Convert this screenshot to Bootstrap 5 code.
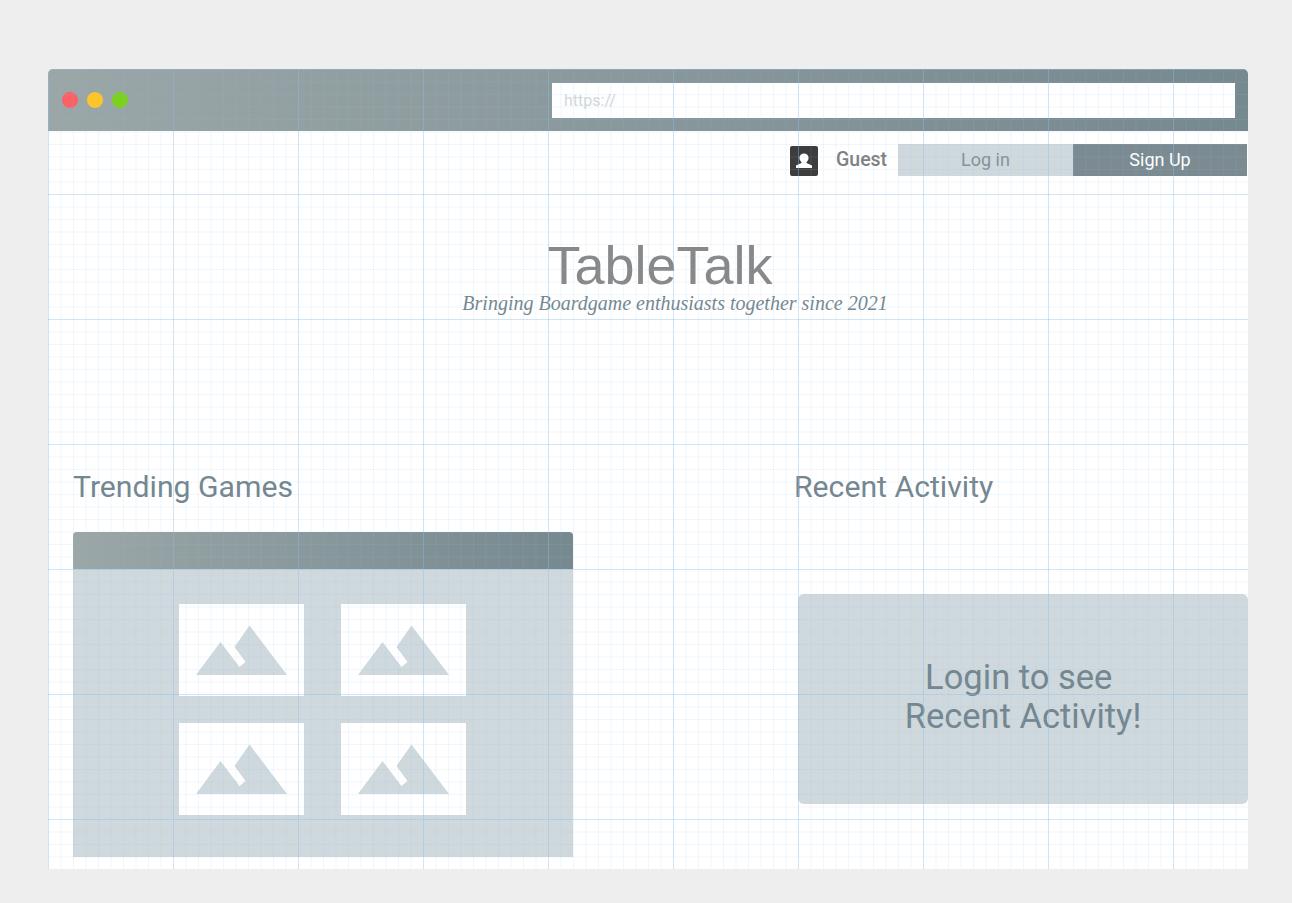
<!DOCTYPE html>
<html lang="en">
<head>
<meta charset="utf-8">
<title>TableTalk</title>
<link href="https://cdn.jsdelivr.net/npm/bootstrap@5.3.0/dist/css/bootstrap.min.css" rel="stylesheet">
<style>
body{background:#eee;font-family:Roboto,sans-serif;margin:0;min-height:903px}
.stage{padding:69px 44px 34px 48px}
.frame{position:relative;width:1200px;height:800px;background:#fff;border-radius:5px 5px 0 0;overflow:hidden}
.grid-sheet{position:absolute;inset:0;pointer-events:none;
 background-image:
  linear-gradient(to right,rgba(140,190,235,.32) 1px,transparent 1px),
  linear-gradient(to bottom,rgba(140,190,235,.32) 1px,transparent 1px),
  linear-gradient(to right,rgba(140,190,235,.13) 1px,transparent 1px),
  linear-gradient(to bottom,rgba(140,190,235,.13) 1px,transparent 1px);
 background-size:125px 125px,125px 125px,12.5px 12.5px,12.5px 12.5px}
.chrome-bar{height:62px;background:linear-gradient(90deg,#9ba6a7,#76898f);padding:14px 13px 0 14px;align-items:flex-start}
.dots{gap:9px;padding-top:9px;width:490px}
.dot{width:16px;height:16px;border-radius:50%}
.dot-r{background:#fb6263}.dot-y{background:#fdc527}.dot-g{background:#7cd11f}
.url-box{width:683px;height:35px;background:#fff;color:#cfd8dc;font-size:16px;line-height:36px;padding-left:12px}
.user-row{height:32px;margin-top:13px;padding-right:1px}
.avatar{width:28px;height:30px;background:#3d3d3d;border-radius:2px;margin:2px 18px 0 0}
.guest{color:#808080;font-size:19.500px;font-weight:500;width:62px}
.acct-btn{width:175px;height:32px;font-size:18px;line-height:32px;padding:0;border:0;border-radius:0}
.acct-in,.acct-in:hover{background:#cfd8dc;color:#84929a}
.acct-up,.acct-up:hover{background:#7b8b91;color:#fff;width:174px}
.brand-box{height:134px;padding-top:59px;text-align:center}
.brand-name{font-family:"Liberation Sans",Arial,sans-serif;font-size:54px;line-height:60px;color:#888;font-weight:400;margin:0 0 0 24px}
.brand-tag{font-family:"Liberation Serif",serif;font-style:italic;font-size:20px;line-height:20px;color:#74878f;margin:-2px 0 0 54px}
.sections{padding:159px 0 0 25px}
.left-sec{width:721px}
.sec-title{font-size:30.2px;line-height:36px;font-weight:400;color:#74868f;margin:0}
.trend-card{width:500px;height:325px;margin-top:27px;background:#cfd8dc;border-radius:4px 4px 0 0;overflow:hidden}
.trend-head{height:37px;background:linear-gradient(90deg,#9ba6a7,#76898f)}
.thumbs{display:grid;grid-template-columns:125px 125px;column-gap:37px;row-gap:27px;padding:35px 0 0 106px}
.thumb{width:125px;height:92px;background:#fff;display:block}
.right-sec{width:454px}
.notice{width:450px;height:210px;margin:89px 0 0 4px;background:#cfd8dc;border-radius:6px;font-size:34.500px;line-height:39px;color:#74868f;text-align:center;padding-top:64px}
</style>
</head>
<body>
<div class="stage">
 <div class="frame">
  <div class="chrome-bar d-flex">
   <div class="dots d-flex"><span class="dot dot-r"></span><span class="dot dot-y"></span><span class="dot dot-g"></span></div>
   <div class="url-box">https://</div>
  </div>
  <div class="user-row d-flex justify-content-end align-items-center">
   <svg class="avatar" viewBox="0 0 28 30" aria-hidden="true"><circle cx="14" cy="12" r="4.6" fill="#fff"/><path d="M11.5 15.5v1.5L6 19.5V22h16v-2.500L16.500 17v-1.500z" fill="#fff"/></svg>
   <span class="guest">Guest</span>
   <a class="btn acct-btn acct-in" href="#">Log in</a>
   <a class="btn acct-btn acct-up" href="#">Sign Up</a>
  </div>
  <div class="brand-box">
   <h1 class="brand-name">TableTalk</h1>
   <p class="brand-tag">Bringing Boardgame enthusiasts together since 2021</p>
  </div>
  <div class="sections d-flex">
   <section class="left-sec">
    <h2 class="sec-title">Trending Games</h2>
    <div class="trend-card">
     <div class="trend-head"></div>
     <div class="thumbs">
      <svg class="thumb" viewBox="0 0 125 92"><polygon points="17,71 41.500,38 60.500,63 66.500,58 55.500,43 70.500,21.500 108,71" fill="#cfd8dc"/></svg>
      <svg class="thumb" viewBox="0 0 125 92"><polygon points="17,71 41.500,38 60.500,63 66.500,58 55.500,43 70.500,21.500 108,71" fill="#cfd8dc"/></svg>
      <svg class="thumb" viewBox="0 0 125 92"><polygon points="17,71 41.500,38 60.500,63 66.500,58 55.500,43 70.500,21.500 108,71" fill="#cfd8dc"/></svg>
      <svg class="thumb" viewBox="0 0 125 92"><polygon points="17,71 41.500,38 60.500,63 66.500,58 55.500,43 70.500,21.500 108,71" fill="#cfd8dc"/></svg>
     </div>
    </div>
   </section>
   <section class="right-sec">
    <h2 class="sec-title">Recent Activity</h2>
    <div class="notice">Login to see&nbsp;<br>Recent Activity!</div>
   </section>
  </div>
  <div class="grid-sheet"></div>
 </div>
</div>
<script src="https://cdn.jsdelivr.net/npm/bootstrap@5.3.0/dist/js/bootstrap.bundle.min.js"></script>
</body>
</html>
